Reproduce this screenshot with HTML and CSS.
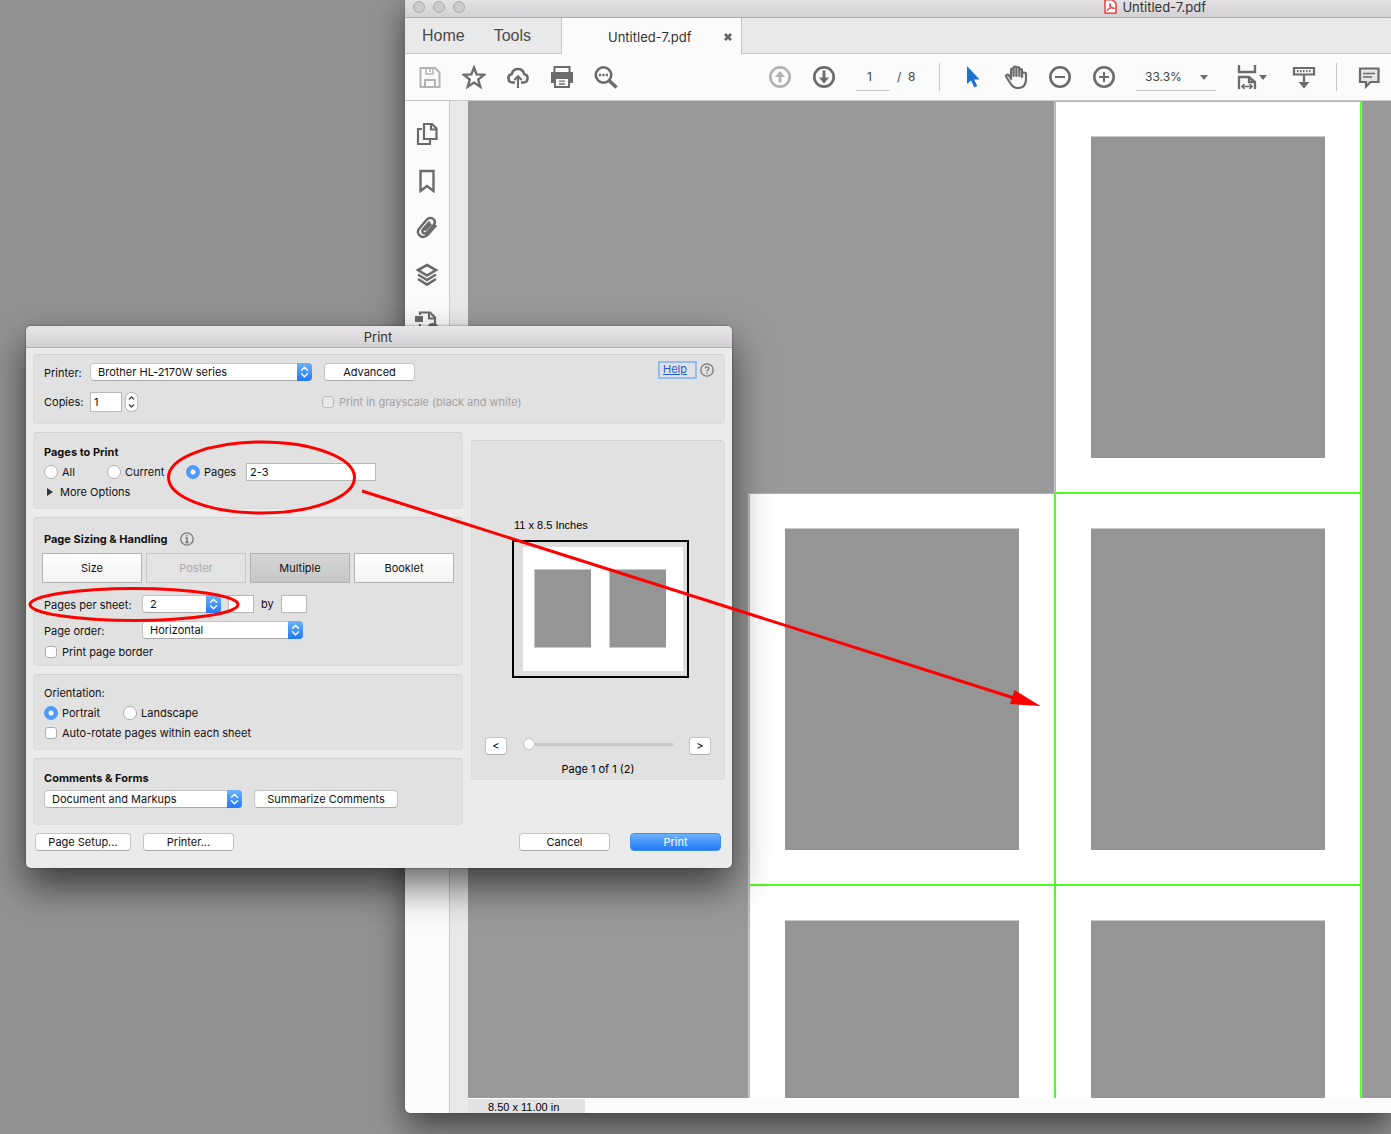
FILE: index.html
```html
<!DOCTYPE html>
<html lang="en">
<head>
<meta charset="utf-8">
<title>Untitled-7.pdf</title>
<link rel="stylesheet" href="styles.css">
</head>
<body>
<svg class="defs" width="0" height="0" aria-hidden="true">
  <symbol id="updown" viewBox="0 0 15 18"><path d="M4.5 7.2 7.5 4.2l3 3M4.5 10.8l3 3 3-3" fill="none" stroke="#fff" stroke-width="1.4" stroke-linecap="round" stroke-linejoin="round"/></symbol>
</svg>
<main class="desktop">
  <section class="viewer" aria-label="Document window">
    <header class="titlebar viewer-title">
      <span class="lights"><i></i><i></i><i></i></span>
      <span class="doc-title">
        <svg width="13" height="15" viewBox="0 0 13 15"><path d="M1 .8h7.500L12 4.200v10H1z" fill="#fff" stroke="#e8252c" stroke-width="1.300"/><path d="M3.200 11.600c2-1.200 3.300-3.700 3.200-6.500 0-1-.9-.7-.7.300.4 2 2 3.900 4.300 4.200 1 0 .6-.9-.3-.9-2.300 0-4.800.9-6.200 1.900-.7.500-.6 1.200-.3 1z" fill="none" stroke="#e8252c"/></svg>
        Untitled-7.pdf
      </span>
    </header>
    <nav class="tabs">
      <div class="tab-links"><a href="#home">Home</a><a href="#tools">Tools</a></div>
      <div class="tab"><span>Untitled-7.pdf</span>
        <button class="close" type="button" aria-label="Close tab"><svg width="8" height="8" viewBox="0 0 8 8"><path d="m1 1 6 6M7 1 1 7" stroke="#666" stroke-width="2.800"/></svg></button>
      </div>
    </nav>
    <div class="toolbar">
      <div class="tools">
        <button type="button" aria-label="Save" disabled><svg viewBox="0 0 24 24" fill="none" stroke="#b3b3b3" stroke-width="2"><path d="M2.500 3H17l4.500 4.500V22h-19zM7 22v-7h10v7"/><path d="M8 3v6h7V3" stroke-width="1.500"/><path d="M11.800 4v3" stroke-width="1.500"/></svg></button>
        <button type="button" aria-label="Star"><svg viewBox="0 0 24 24" fill="none" stroke="#6b6b6b" stroke-width="2.300"><path d="m12 2.500 2.600 7 7.600.3-6 4.700 2.100 7.300L12 17.600l-6.300 4.200 2.100-7.300-6-4.700 7.600-.3z"/></svg></button>
        <button type="button" aria-label="Upload"><svg viewBox="0 0 24 24" fill="none" stroke="#6b6b6b" stroke-width="2.600"><path d="M9 17.500H6.500a4.300 4.300 0 0 1-.7-8.500 6.300 6.300 0 0 1 12.300 0 4.300 4.300 0 0 1-.6 8.500H15"/><path d="M12 23V11.500M8.300 15 12 11.300l3.700 3.700" stroke-width="2.100"/></svg></button>
        <button type="button" aria-label="Print"><svg viewBox="0 0 24 24"><path d="M4.500 7.500V2h15v5.500" fill="none" stroke="#6b6b6b" stroke-width="2"/><path d="M1 7h22v11H1z" fill="#6b6b6b"/><path d="M5 13h14v9H5z" fill="#fafafa" stroke="#6b6b6b" stroke-width="2"/><path d="M9 16.200h6M9 19h6" stroke="#6b6b6b" stroke-width="1.300"/></svg></button>
        <button type="button" aria-label="Search"><svg viewBox="0 0 24 24" fill="none" stroke="#6b6b6b"><circle cx="9.500" cy="10" r="7.700" stroke-width="2.600"/><path d="m15 15.500 7.500 7" stroke-width="3.500"/><path d="M5 10h2.200M8.400 10h2.200M11.800 10H14" stroke-width="2.600"/></svg></button>
      </div>
      <div class="tools paging">
        <button type="button" aria-label="Previous page" disabled><svg viewBox="0 0 24 24" fill="none" stroke="#b3b3b3"><circle cx="12" cy="12" r="9.700" stroke-width="2.700"/><path d="M12 17.500V9" stroke-width="2.800"/><path d="m12 6 5 6H7z" fill="#b3b3b3" stroke="none"/></svg></button>
        <button type="button" aria-label="Next page"><svg viewBox="0 0 24 24" fill="none" stroke="#6b6b6b"><circle cx="12" cy="12" r="9.700" stroke-width="2.700"/><path d="M12 5.500V15" stroke-width="2.800"/><path d="m12 18.500 5-6H7z" fill="#6b6b6b" stroke="none"/></svg></button>
      </div>
      <label class="page-no"><input type="text" value="1" aria-label="Page number"><span>/&nbsp; 8</span></label>
      <span class="rule"></span>
      <div class="tools">
        <button type="button" aria-label="Select"><svg viewBox="0 0 24 24"><path d="M7 1v18l4-3.500 3.300 7 3-1.500-3.200-6.500h5.400z" fill="#1e73cc"/></svg></button>
        <button type="button" aria-label="Hand"><svg viewBox="0 0 24 24" fill="none" stroke="#6b6b6b" stroke-width="2.200" stroke-linejoin="round" stroke-linecap="round"><path d="M7 14V5c0-2 2.600-2 2.600 0v6M9.600 5V3c0-2 2.800-2 2.800 0v8M12.400 3.500c0-2 2.900-2 2.900 0V11M15.300 5.500c0-2 2.700-2 2.700 0V12M18 9c0-2 4-2 4 0v5c0 5.500-2.500 9-8 9-4 0-6-2-7.500-4.500L2.300 12c-1-2 1.200-3.200 2.600-1.500L7 14"/></svg></button>
        <button type="button" aria-label="Zoom out"><svg viewBox="0 0 24 24" fill="none" stroke="#6b6b6b" stroke-width="2.600"><circle cx="12" cy="12" r="9.700"/><path d="M7 12h10" stroke-width="2"/></svg></button>
        <button type="button" aria-label="Zoom in"><svg viewBox="0 0 24 24" fill="none" stroke="#6b6b6b" stroke-width="2.600"><circle cx="12" cy="12" r="9.700"/><path d="M7 12h10M12 7v10" stroke-width="2"/></svg></button>
      </div>
      <span class="zoom"><select aria-label="Zoom level"><option>33.3%</option></select><svg width="8" height="5" viewBox="0 0 8 5"><path d="M0 0h8L4 5z" fill="#6b6b6b"/></svg></span>
      <div class="tools view-tools">
        <button class="wide" type="button" aria-label="Page fit"><svg viewBox="0 0 24 24" fill="none" stroke="#6b6b6b" stroke-width="2.300"><path d="M4 0v7h16V0M4 24V12h10l6 5v7M14 12v5h6"/><path d="M7 21.500h10M9.500 19 7 21.500 9.500 24M14.500 19l2.500 2.500-2.500 2.500" stroke-width="1.600"/></svg><svg class="caret" width="8" height="5" viewBox="0 0 8 5"><path d="M0 0h8L4 5z" fill="#6b6b6b"/></svg></button>
        <button type="button" aria-label="Scrolling"><svg viewBox="0 0 24 24" fill="none" stroke="#6b6b6b" stroke-width="2.200"><path d="M2 3h20v6.500H2z"/><path d="M5 6.200h14" stroke-dasharray="1.500 1.500"/><path d="M12 10v9" /><path d="M6.500 17h11L12 23.500z" fill="#6b6b6b" stroke="none"/></svg></button>
      </div>
      <span class="rule"></span>
      <div class="tools">
        <button type="button" aria-label="Comment"><svg viewBox="0 0 24 24" fill="#e6e6e6" stroke="#6b6b6b" stroke-width="2.200"><path d="M3 3.500h18.500V17h-8L9 21.500V17H3z"/><path d="M6 8.500h12M6 12h9" stroke-width="1.400"/></svg></button>
      </div>
    </div>
    <div class="viewer-body">
      <aside class="rail">
        <button type="button" aria-label="Thumbnails"><svg viewBox="0 0 24 24" fill="none" stroke="#6b6b6b" stroke-width="2.200"><path d="M7 7H3v15h12v-4"/><path d="M9 2h8l4.500 4.500V17H9zM16 2v5.500h5.500"/></svg></button>
        <button type="button" aria-label="Bookmarks"><svg viewBox="0 0 24 24" fill="none" stroke="#6b6b6b" stroke-width="2.400"><path d="M5.500 2h13v20L12 17l-6.500 5z"/></svg></button>
        <button type="button" aria-label="Attachments"><svg viewBox="0 0 24 24" fill="none" stroke="#6b6b6b" stroke-width="2.500" stroke-linecap="round"><path d="m20.500 10-7.500 8.500c-5 5.500-13 0-9-5.800L11.500 4c4-5 11 0 7.300 4.800L12 16.500c-2.500 2.500-6-.3-4-3.200L14 6.500M10.500 14l5-5.500"/></svg></button>
        <button type="button" aria-label="Layers"><svg viewBox="0 0 24 24" fill="none" stroke="#6b6b6b" stroke-width="2.600"><path d="m12 2 9 5-9 5.500L3 7zM3 11.500l9 5.500 9-5.500M3 16l9 5.700 9-5.700"/></svg></button>
        <button type="button" aria-label="Model"><svg viewBox="0 0 24 24" fill="none" stroke="#6b6b6b" stroke-width="2.200"><path d="M5 5V2.500h10l5 5V14M14 3v5.500h6"/><path d="M0 6h8v6H0zM13 16c0-4 9-4 10 0z" fill="#6b6b6b" stroke="none"/><path d="M5 14v8h12"/></svg></button>
      </aside>
      <div class="strip"></div>
      <div class="doc">
        <div class="canvas">
          <div class="sheets">
            <div class="sheet lead"><div></div></div>
            <div class="sheet"><div></div></div>
            <div class="sheet"><div></div></div>
            <div class="sheet"><div></div></div>
            <div class="sheet"><div></div></div>
          </div>
        </div>
        <footer class="status"><span>8.50 x 11.00 in</span></footer>
      </div>
    </div>
  </section>

  <form class="dialog" aria-label="Print">
    <header class="titlebar dialog-title">Print</header>
    <div class="dialog-body">
      <section class="panel printer">
        <div class="row device">
          <label class="lead-label" for="printer">Printer:</label>
          <span class="select w-printer"><select id="printer"><option>Brother HL-2170W series</option></select><svg><use href="#updown"/></svg></span>
          <button class="btn advanced" type="button">Advanced</button>
          <span class="help-group"><a class="help" href="#help">Help</a><svg class="hint" viewBox="0 0 14 14"><circle cx="7" cy="7" r="6.200"/><path d="M5.200 5.600c0-2.300 3.600-2.300 3.600 0C8.800 6.900 7 7 7 8.600M7 9.700v1.300"/></svg></span>
        </div>
        <div class="row copies">
          <label class="lead-label" for="copies">Copies:</label>
          <input id="copies" type="text" value="1">
          <button class="stepper" type="button" aria-label="Change copies"><svg width="11" height="18" viewBox="0 0 11 18"><path d="m3 6.500 2.500-2.500L8 6.500M3 11.500 5.500 14 8 11.500" fill="none" stroke="#444" stroke-width="1.300"/></svg></button>
          <label class="check off"><input type="checkbox" disabled>Print in grayscale (black and white)</label>
        </div>
      </section>

      <div class="columns">
        <div class="left">
          <section class="panel pages">
            <h2>Pages to Print</h2>
            <div class="row range">
              <label class="check all"><input type="radio" name="range">All</label>
              <label class="check current"><input type="radio" name="range">Current</label>
              <label class="check some"><input type="radio" name="range" checked>Pages</label>
              <input class="range-text" type="text" value="2-3" aria-label="Page range">
            </div>
            <button class="more" type="button"><svg width="7" height="8" viewBox="0 0 7 8"><path d="M0 0v8l6-4z" fill="#333"/></svg>More Options</button>
          </section>

          <section class="panel sizing">
            <h2>Page Sizing &amp; Handling <svg class="hint" viewBox="0 0 14 14"><circle cx="7" cy="7" r="6.200"/><path d="M7 3v1.600M5.500 6H7v4.500M5.200 10.500h3.600" stroke-width="1.500"/></svg></h2>
            <div class="modes">
              <button type="button">Size</button>
              <button type="button" disabled>Poster</button>
              <button type="button" class="on">Multiple</button>
              <button type="button">Booklet</button>
            </div>
            <div class="row per-sheet">
              <label for="per-sheet">Pages per sheet:</label>
              <span class="select w-count"><select id="per-sheet"><option>2</option></select><svg><use href="#updown"/></svg></span>
              <input class="tiny" type="text" aria-label="Columns"><span>by</span><input class="tiny" type="text" aria-label="Rows">
            </div>
            <div class="row per-sheet">
              <label for="order">Page order:</label>
              <span class="select w-order"><select id="order"><option>Horizontal</option></select><svg><use href="#updown"/></svg></span>
            </div>
            <label class="check"><input type="checkbox">Print page border</label>
          </section>

          <section class="panel orient">
            <p>Orientation:</p>
            <div class="row">
              <label class="check current"><input type="radio" name="orient" checked>Portrait</label>
              <label class="check"><input type="radio" name="orient">Landscape</label>
            </div>
            <label class="check"><input type="checkbox">Auto-rotate pages within each sheet</label>
          </section>

          <section class="panel comments">
            <h2>Comments &amp; Forms</h2>
            <div class="row">
              <span class="select w-markup"><select aria-label="Comments and forms"><option>Document and Markups</option></select><svg><use href="#updown"/></svg></span>
              <button class="btn summarize" type="button">Summarize Comments</button>
            </div>
          </section>
        </div>

        <section class="panel preview">
          <p class="paper">11 x 8.5 Inches</p>
          <div class="frame"><div class="paper-sheet"><i></i><i></i></div></div>
          <div class="nav">
            <button class="btn" type="button" aria-label="Previous">&lt;</button>
            <input type="range" min="0" max="1" value="0" aria-label="Preview page">
            <button class="btn" type="button" aria-label="Next">&gt;</button>
          </div>
          <p class="count">Page 1 of 1 (2)</p>
        </section>
      </div>

      <footer class="actions">
        <button class="btn setup" type="button">Page Setup...</button>
        <button class="btn" type="button">Printer...</button>
        <button class="btn cancel" type="button">Cancel</button>
        <button class="btn primary" type="button">Print</button>
      </footer>
    </div>
  </form>

  <svg class="marks" width="1391" height="1134" aria-hidden="true">
    <g fill="none" stroke="#f00" stroke-width="3"><ellipse cx="261.500" cy="477.500" rx="93" ry="35.500"/><ellipse cx="134" cy="604.500" rx="104" ry="16"/><path d="M362 491 1014 698"/></g>
    <path d="M1014.500 690 1040.500 706 1010 704z" fill="#f00"/>
  </svg>
</main>
</body>
</html>
```
FILE: styles.css
```css
* { box-sizing: border-box; }
body { margin: 0; font: 11px/20px Inter, "Liberation Sans", sans-serif; color: #111; }
button, input, select { font: inherit; color: inherit; margin: 0; padding: 0; }
button { border: 0; background: none; }
h2, p { margin: 0; font-size: 11px; }
h2 { font-weight: 700; }
svg { flex: none; }
.defs { position: absolute; }

.desktop { position: relative; min-height: 100vh; overflow: hidden; background: #929292; }
.titlebar { height: 22px; border-bottom: 1px solid #b1afb1; background: linear-gradient(#e8e6e8, #d3d1d3); color: #333; display: flex; align-items: center; font-size: 13px; }

/* Document window */
.viewer { position: absolute; left: 405px; right: 0; top: -4px; bottom: 21px; display: flex; flex-direction: column; background: #fbfbfb; border-radius: 5px 0 0 5px; box-shadow: 0 14px 32px rgba(0, 0, 0, .55), 0 0 1px rgba(0, 0, 0, .5); overflow: hidden; }
.lights { display: flex; gap: 8px; padding-left: 8px; }
.lights i { width: 12px; height: 12px; border-radius: 50%; background: #cdcbcd; border: 1px solid #acaaac; }
.viewer-title { justify-content: space-between; padding-right: 185px; }
.doc-title { display: flex; align-items: center; gap: 5px; }
.tabs { display: flex; height: 36px; background: #e9e9e9; }
.tabs::after { content: ""; flex: 1; border-bottom: 1px solid #c8c8c8; }
.tab-links { display: flex; gap: 29px; width: 156px; padding-left: 17px; border-bottom: 1px solid #c8c8c8; font: 16px/36px "Liberation Sans", sans-serif; }
.tab-links a { color: #4a4a4a; text-decoration: none; }
.tab { display: flex; align-items: center; justify-content: space-between; width: 181px; padding: 2px 9px 0 46px; background: #fbfbfb; border: solid #c8c8c8; border-width: 0 1px; font-size: 13px; color: #333; }
.close { display: flex; }
.toolbar { display: flex; align-items: center; height: 47px; padding-left: 9px; border-bottom: 1px solid #c8c8c8; color: #444; font-size: 12px; }
.tools { display: flex; gap: 12px; }
.tools button { display: flex; align-items: center; justify-content: center; width: 32px; height: 32px; }
.tools svg { width: 24px; height: 24px; }
.tools .caret { width: 8px; height: 5px; }
.tools .wide { width: 34px; }
.paging { margin-left: 142px; }
.page-no { display: flex; align-items: center; gap: 7px; width: 83px; margin-left: 16px; }
.page-no input { width: 34px; height: 27px; padding-right: 7px; border: 0; border-bottom: 1px solid #c8c8c8; background: none; text-align: center; }
.rule { width: 1px; height: 28px; margin-right: 16px; background: #c8c8c8; }
.zoom { position: relative; margin: 0 18px 0 16px; }
.zoom select { appearance: none; width: 80px; height: 27px; padding-left: 9px; border: 0; border-bottom: 1px solid #c8c8c8; border-radius: 0; background: none; }
.zoom svg { position: absolute; right: 8px; top: 11px; pointer-events: none; }
.view-tools { gap: 20px; margin-right: 16px; }
.viewer-body { display: flex; flex: 1; min-height: 0; }
.rail { display: flex; flex-direction: column; align-items: center; gap: 19px; width: 45px; padding-top: 19px; border-right: 1px solid #c8c8c8; }
.rail button { display: flex; align-items: center; height: 28px; }
.rail svg { width: 24px; height: 24px; }
.strip { width: 18px; background: #e9e9e9; }
.doc { display: flex; flex: 1; flex-direction: column; }
.canvas { flex: 1; min-height: 0; padding-right: 30px; background: #999; overflow: hidden; }
.sheets { display: grid; grid-template-columns: 306px 306px; grid-auto-rows: 392px; justify-content: end; filter: drop-shadow(-1px 0 0 #c8c8c8) drop-shadow(1px 0 0 #c8c8c8); }
.sheet { padding: 34px 35px; border: 1px solid #4cff20; background: #fff; }
.sheet.lead { grid-column: 2; }
.sheet div { height: 322px; border-top: 1px solid #c8c8c8; background: #959595; }
.status { height: 15px; border-top: 1px solid #fff; background: #fbfbfb; font: 11px/16px "Liberation Sans", sans-serif; color: #000; }
.status span { display: block; width: 117px; padding-left: 20px; background: #e2e2e2; }

/* Print dialog */
.dialog { position: absolute; left: 26px; top: 326px; width: 706px; border-radius: 5px; background: #ebebeb; box-shadow: 0 18px 38px rgba(0, 0, 0, .6), 0 0 2px rgba(0, 0, 0, .5); }
.dialog-title { justify-content: center; padding-right: 2px; border-radius: 5px 5px 0 0; }
.dialog-body { padding: 6px 7px 17px; }
.panel { padding: 0 10px; border: 1px solid #dcdcdc; border-top-color: #d2d2d2; border-radius: 4px; background: #e1e1e1; }
.row { display: flex; align-items: center; }
.printer { height: 70px; padding-top: 8px; }
.device { height: 18px; }
.lead-label { width: 46px; }
.device .lead-label { padding-top: 2px; }
.copies { height: 20px; margin-top: 11px; }
.dialog input[type="text"] { height: 18px; padding-left: 3px; border: 1px solid #b9b9b9; border-radius: 0; background: #fff; }
.dialog #copies { width: 32px; height: 20px; }
.stepper { display: flex; margin: 0 185px 0 4px; border-radius: 5px; background: #fff; box-shadow: 0 0 0 1px #bdbdbd; }
.select { position: relative; display: flex; }
.select select { appearance: none; width: 100%; height: 18px; padding-left: 7px; border: 1px solid #c4c4c4; border-bottom-color: #aaa; border-radius: 4px; background: #fff; line-height: 16px; }
.select svg { position: absolute; right: 0; top: 0; width: 15px; height: 18px; border-radius: 0 4px 4px 0; background: linear-gradient(#6cb3fa, #2079f8); pointer-events: none; }
.w-printer { width: 222px; }
.w-count { width: 79px; }
.w-order { width: 161px; }
.w-markup { width: 198px; }
.btn { width: 91px; height: 18px; border: 1px solid #c4c4c4; border-bottom-color: #aaa; border-radius: 4px; background: #fff; line-height: 16px; }
.advanced { margin-left: 12px; }
.help-group { display: flex; align-items: center; gap: 3px; margin: 0 0 4px auto; }
.help { width: 39px; height: 18px; padding-left: 3px; border: 2px solid #94bdec; color: #1c5bd0; line-height: 12px; text-decoration: underline; }
.hint { width: 14px; height: 14px; fill: none; stroke: #777; stroke-width: 1.300; }
.check { display: flex; align-items: center; gap: 5px; height: 20px; }
.off { color: #a3a3a3; }
.check input { appearance: none; width: 12px; height: 12px; border: 1px solid #adadad; border-radius: 3px; background: #fff; }
.check input[type="checkbox"] { margin: 0 0 0 1px; }
.off input[type="checkbox"] { margin: 0; border-color: #bcbcbc; background: #e8e8e8; }
.check input[type="radio"] { width: 14px; height: 14px; margin-right: -1px; border-radius: 50%; }
.check input[type="radio"]:checked { border-color: #4a9bfa; background: radial-gradient(circle, #fff 2px, #4a9bfa 3px); }
.columns { display: flex; gap: 8px; margin-top: 8px; }
.left { display: flex; flex: 1; flex-direction: column; gap: 8px; }
.pages { padding-top: 9px; padding-bottom: 6px; }
.all { width: 63px; }
.current { width: 79px; }
.some { width: 60px; }
.range-text { width: 130px; }
.more { display: flex; align-items: center; gap: 6px; height: 20px; padding-left: 3px; }
.sizing { padding-top: 11px; padding-bottom: 3px; }
.sizing h2 { display: flex; align-items: center; gap: 12px; }
.modes { display: grid; grid-template-columns: repeat(4, 1fr); gap: 4px; margin: 4px -2px 12px; }
.modes button { height: 30px; border: 1px solid #b3b3b3; background: linear-gradient(#fff, #f3f3f3); }
.modes button:disabled { border-color: #c6c6c6; background: #e3e3e3; color: #a9a9a9; }
.modes .on { background: linear-gradient(#d6d6d6, #c6c6c6); }
.per-sheet { height: 18px; margin-bottom: 8px; }
.per-sheet + .check { margin-top: -5px; }
.per-sheet label { width: 98px; padding-top: 2px; }
.tiny { width: 26px; margin: 0 7px; }
.orient { padding-top: 9px; padding-bottom: 6px; }
.orient p { line-height: 19px; }
.comments { padding-top: 9px; padding-bottom: 16px; }
.comments .row { gap: 12px; margin-top: 2px; }
.summarize { width: 144px; }
.preview { display: flex; flex-direction: column; width: 254px; height: 340px; margin-top: 8px; padding: 74px 13px 0; color: #000; }
.paper { padding-left: 29px; font-family: "Liberation Sans", sans-serif; }
.frame { width: 177px; margin: 5px 0 59px 27px; padding: 5px 4px 5px 9px; border: 2px solid #000; background: #dedede; }
.paper-sheet { display: flex; gap: 18px; height: 124px; padding: 22px 0 0 11px; background: #fff; }
.paper-sheet i { width: 57px; height: 79px; border: solid #c8c8c8; border-width: 1px 0 1px 1px; background: #959595; }
.nav { display: flex; align-items: center; justify-content: space-between; }
.nav .btn { width: 22px; }
.nav input { appearance: none; width: 150px; height: 12px; margin-bottom: 4px; background: linear-gradient(#c8c8c8, #c8c8c8) center / 100% 3px no-repeat; }
.nav input::-webkit-slider-thumb { appearance: none; width: 12px; height: 12px; border: 1px solid #c4c4c4; border-radius: 50%; background: #fafafa; }
.count { padding-top: 4px; text-align: center; }
.actions { display: flex; gap: 12px; margin: 8px 4px 0 2px; }
.setup { width: 96px; }
.cancel { margin-left: auto; margin-right: 8px; }
.primary { border-color: #3f8ff5; background: linear-gradient(#6cb3fa, #2079f8); color: #fff; }

.marks { position: absolute; left: 0; top: 0; pointer-events: none; }
```
